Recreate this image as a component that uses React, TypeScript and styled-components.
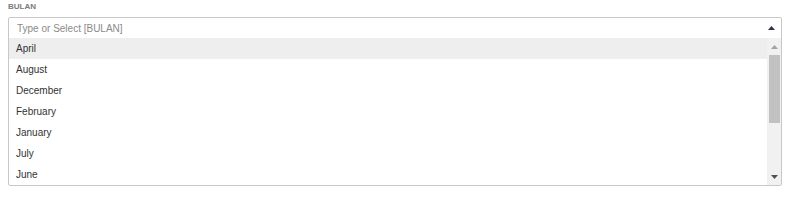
import React from "react";
import styled, { createGlobalStyle } from "styled-components";

const Global = createGlobalStyle`
  html, body { margin: 0; padding: 0; background: #fff; }
  body { font-family: "Liberation Sans", Arial, sans-serif; }
`;

const Page = styled.div`
  padding: 3px 13px 0 8px;
  display: flex;
  flex-direction: column;
`;

const Label = styled.div`
  font-size: 8px;
  font-weight: 700;
  color: #7a7a7a;
  height: 14px;
  line-height: 8px;
`;

const Box = styled.div`
  border: 1px solid #c8c8c8;
  border-radius: 2px;
  display: flex;
  flex-direction: column;
`;

const InputRow = styled.div`
  height: 20px;
  display: flex;
  align-items: center;
  padding: 0 6px 0 8px;
`;

const Placeholder = styled.div`
  flex: 1;
  font-size: 10px;
  color: #8a8a8a;
`;

const Caret = styled.svg`
  width: 7px;
  height: 4px;
`;

const ListArea = styled.div`
  height: 147px;
  display: flex;
`;

const Options = styled.div`
  flex: 1;
  display: flex;
  flex-direction: column;
`;

const Option = styled.div<{ $active?: boolean }>`
  height: 21px;
  display: flex;
  align-items: center;
  padding-left: 7px;
  font-size: 10px;
  color: #333;
  background: ${(p) => (p.$active ? "#eeeeee" : "transparent")};
`;

const Scrollbar = styled.div`
  width: 14px;
  background: #f1f1f1;
  display: flex;
  flex-direction: column;
  align-items: center;
`;

const ArrowBox = styled.div`
  height: 17px;
  width: 100%;
  display: flex;
  align-items: center;
  justify-content: center;
`;

const Thumb = styled.div`
  width: 11px;
  height: 68px;
  background: #c1c1c1;
`;

const Spacer = styled.div`
  flex: 1;
`;

const months = ["April", "August", "December", "February", "January", "July", "June"];

export default function App() {
  return (
    <>
      <Global />
      <Page>
        <Label>BULAN</Label>
        <Box>
          <InputRow>
            <Placeholder>Type or Select [BULAN]</Placeholder>
            <Caret viewBox="0 0 7 4">
              <path d="M0 4 L3.5 0 L7 4 Z" fill="#2b3440" />
            </Caret>
          </InputRow>
          <ListArea>
            <Options>
              {months.map((m, i) => (
                <Option key={m} $active={i === 0}>
                  {m}
                </Option>
              ))}
            </Options>
            <Scrollbar>
              <ArrowBox>
                <Caret viewBox="0 0 7 4">
                  <path d="M0 4 L3.5 0 L7 4 Z" fill="#a3a3a3" />
                </Caret>
              </ArrowBox>
              <Thumb />
              <Spacer />
              <ArrowBox>
                <Caret viewBox="0 0 7 4">
                  <path d="M0 0 L3.5 4 L7 0 Z" fill="#505050" />
                </Caret>
              </ArrowBox>
            </Scrollbar>
          </ListArea>
        </Box>
      </Page>
    </>
  );
}
